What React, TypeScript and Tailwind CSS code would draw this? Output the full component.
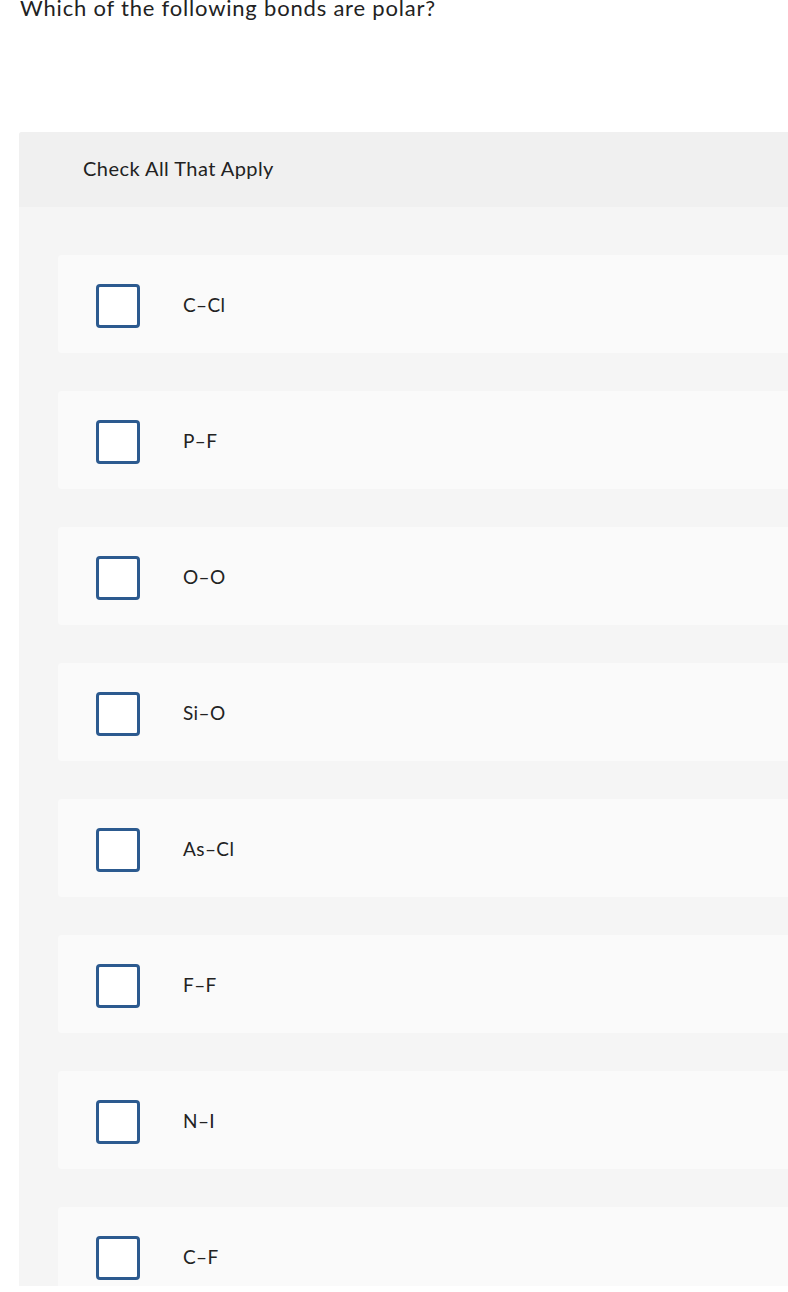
const options = ["C–Cl", "P–F", "O–O", "Si–O", "As–Cl", "F–F", "N–I", "C–F"];

function Checkbox() {
  return (
    <div className="w-[44px] h-[44px] shrink-0 rounded-[4px] border-[3px] border-[#2c5a8f] bg-white" />
  );
}

export default function App() {
  return (
    <div
      className="w-[788px] min-h-[1292px] bg-white overflow-hidden text-[#222]"
      style={{ fontFamily: "Lato, 'Open Sans', sans-serif" }}
    >
      <p className="pl-[20px] -mt-[5px] text-[22px] leading-[25px] tracking-[0.8px]">
        Which of the following bonds are polar?
      </p>

      <div className="ml-[19px] mt-[112px] h-[1154px] overflow-hidden rounded-tl-[3px] bg-[#f5f5f5]">
        {/* Header */}
        <div className="h-[75px] flex items-center pl-[64px] pb-[4px] bg-[#f0f0f0] text-[20px] tracking-[0.45px]">
          Check All That Apply
        </div>

        {/* Options */}
        <div className="pl-[39px] pt-[48px] flex flex-col gap-[38px]">
          {options.map((o) => (
            <div
              key={o}
              className="h-[98px] shrink-0 flex items-center pl-[38px] pt-[3px] rounded-l-[4px] bg-[#fafafa]"
            >
              <Checkbox />
              <span className="ml-[43px] text-[19px] tracking-[0.4px]">{o}</span>
            </div>
          ))}
        </div>
      </div>
    </div>
  );
}
